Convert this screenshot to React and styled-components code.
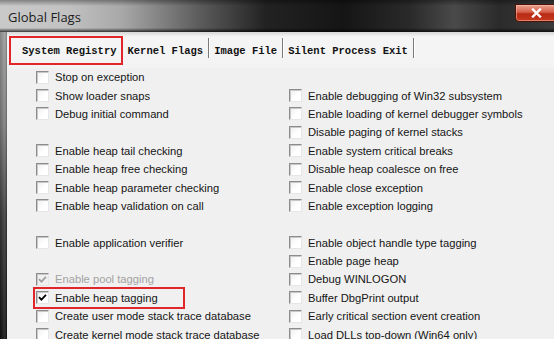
import React from "react";
import styled, { createGlobalStyle, css } from "styled-components";

const Global = createGlobalStyle`
  html, body { margin: 0; padding: 0; }
  body { width: 554px; height: 339px; overflow: hidden; background: #f0f0f0; }
`;

const Window = styled.div`
  width: 554px;
  height: 339px;
  display: flex;
  flex-direction: column;
  overflow: hidden;
`;

const TitleBar = styled.div`
  height: 32px;
  flex: none;
  display: flex;
  align-items: flex-start;
  justify-content: space-between;
  background:
    linear-gradient(to bottom, rgba(0,0,0,0.35) 0px, rgba(0,0,0,0) 6px, rgba(0,0,0,0) 28px, rgba(0,0,0,0.55) 31px, rgba(0,0,0,0.7) 32px),
    linear-gradient(to right, #c9c9c9 0%, #c2c2c2 12%, #a8a8a8 22%, #5c5c5c 36%, #222 48%, #151515 62%, #2a2a2a 74%, #4a4a4a 82%, #2b2b2b 90%, #3a3a3a 100%);
`;

const Title = styled.span`
  font-family: "Open Sans", "Liberation Sans", sans-serif;
  font-size: 13px;
  color: #1c1c1c;
  margin: 8px 0 0 8px;
  line-height: 18px;
`;

const CloseButton = styled.div`
  width: 42px;
  height: 18px;
  margin: 4px -3px 0 0;
  box-sizing: border-box;
  border: 1px solid #4a1208;
  border-radius: 0 0 0 4px;
  background: linear-gradient(to bottom, #e9a18e 0%, #d5604a 45%, #b82a14 55%, #c63a1e 100%);
  box-shadow: inset 0 0 0 1px rgba(255, 200, 180, 0.5);
  display: flex;
  align-items: center;
  justify-content: center;
`;

const Body = styled.div`
  flex: 1;
  display: flex;
  min-height: 0;
`;

const SideFrame = styled.div`
  width: 7px;
  flex: none;
  background:
    linear-gradient(to right, rgba(0,0,0,0.15), rgba(255,255,255,0.12) 70%, rgba(0,0,0,0.2)),
    linear-gradient(to bottom, #9c9c9c 0%, #7c7c7c 30%, #3a3a3a 60%, #111 100%);
`;

const Content = styled.div`
  flex: 1;
  display: flex;
  flex-direction: column;
  background: #f0f0f0;
  min-width: 0;
`;

const TabBar = styled.div`
  height: 36px;
  flex: none;
  box-sizing: border-box;
  display: flex;
  align-items: flex-start;
  padding: 4px 0 0 2px;
  background: linear-gradient(to bottom, #d6d6d6 0px, #eaeaea 3px, #f5f5f5 5px, #f3f3f3 100%);
`;

const Tab = styled.div`
  height: 29px;
  box-sizing: border-box;
  display: flex;
  align-items: center;
  font-family: "Liberation Mono", "DejaVu Sans Mono", monospace;
  font-weight: bold;
  font-size: 10.5px;
  color: #111;
  white-space: nowrap;
  padding: 0 5px;
  ${(p) =>
    p.$active &&
    css`
      border: 2px solid #e0262a;
      padding: 0 4px 0 11px;
    `}
`;

const TabSep = styled.div`
  width: 1px;
  height: 20px;
  margin-top: 2px;
  background: #7a7a7a;
  box-shadow: 1px 0 0 #ffffff;
  flex: none;
`;

const Panel = styled.div`
  flex: 1;
  display: grid;
  grid-template-columns: 253px 1fr;
  grid-template-rows: repeat(15, 18.4px);
  grid-auto-flow: column;
  padding-left: 29px;
  min-height: 0;
`;

const Row = styled.div`
  position: relative;
  display: flex;
  align-items: center;
  gap: 6px;
  white-space: nowrap;
  font-family: "Liberation Sans", Arial, sans-serif;
  font-size: 11.2px;
  color: ${(p) => (p.$disabled ? "#a3a3a3" : "#151515")};
  ${(p) =>
    p.$highlight &&
    css`
      &::after {
        content: "";
        position: absolute;
        left: -3px;
        top: -2px;
        width: 152px;
        height: 22px;
        box-sizing: border-box;
        border: 2px solid #e0262a;
        pointer-events: none;
      }
    `}
`;

const Box = styled.span`
  width: 13px;
  height: 13px;
  flex: none;
  box-sizing: border-box;
  border-style: solid;
  border-width: 1px;
  border-color: #8c8c8c #e6e6e6 #e6e6e6 #8c8c8c;
  box-shadow: inset 1px 1px 0 #c8c8c8;
  background: ${(p) =>
    p.$disabled ? "#f0f0f0" : "linear-gradient(135deg, #efefef 0%, #ffffff 60%)"};
  display: flex;
  align-items: center;
  justify-content: center;
`;

const Label = styled.span`
  line-height: 14px;
`;

function CheckMark({ color }) {
  return (
    <svg width="9" height="9" viewBox="0 0 9 9">
      <path d="M1 4.2 L3.4 6.6 L8 1.8" stroke={color} strokeWidth="1.8" fill="none" />
    </svg>
  );
}

function Flag({ item }) {
  if (!item) return <div />;
  const it = typeof item === "string" ? { label: item } : item;
  return (
    <Row $disabled={it.disabled} $highlight={it.highlight}>
      <Box $disabled={it.disabled}>
        {it.checked && <CheckMark color={it.disabled ? "#a0a0a0" : "#000"} />}
      </Box>
      <Label>{it.label}</Label>
    </Row>
  );
}

const left = [
  "Stop on exception",
  "Show loader snaps",
  "Debug initial command",
  null,
  "Enable heap tail checking",
  "Enable heap free checking",
  "Enable heap parameter checking",
  "Enable heap validation on call",
  null,
  "Enable application verifier",
  null,
  { label: "Enable pool tagging", checked: true, disabled: true },
  { label: "Enable heap tagging", checked: true, highlight: true },
  "Create user mode stack trace database",
  "Create kernel mode stack trace database",
];

const right = [
  null,
  "Enable debugging of Win32 subsystem",
  "Enable loading of kernel debugger symbols",
  "Disable paging of kernel stacks",
  "Enable system critical breaks",
  "Disable heap coalesce on free",
  "Enable close exception",
  "Enable exception logging",
  null,
  "Enable object handle type tagging",
  "Enable page heap",
  "Debug WINLOGON",
  "Buffer DbgPrint output",
  "Early critical section event creation",
  "Load DLLs top-down (Win64 only)",
];

const tabs = ["System Registry", "Kernel Flags", "Image File", "Silent Process Exit"];

export default function App() {
  return (
    <Window>
      <Global />
      <TitleBar>
        <Title>Global Flags</Title>
        <CloseButton>
          <svg width="11" height="10" viewBox="0 0 11 10">
            <path d="M2 1.5 L9 8.5 M9 1.5 L2 8.5" stroke="#fff" strokeWidth="2.4" strokeLinecap="square" />
          </svg>
        </CloseButton>
      </TitleBar>
      <Body>
        <SideFrame />
        <Content>
          <TabBar>
            {tabs.map((t, i) => (
              <React.Fragment key={t}>
                <Tab $active={i === 0}>{t}</Tab>
                {i > 0 && <TabSep />}
              </React.Fragment>
            ))}
          </TabBar>
          <Panel>
            {left.map((it, i) => (
              <Flag key={"l" + i} item={it} />
            ))}
            {right.map((it, i) => (
              <Flag key={"r" + i} item={it} />
            ))}
          </Panel>
        </Content>
      </Body>
    </Window>
  );
}
